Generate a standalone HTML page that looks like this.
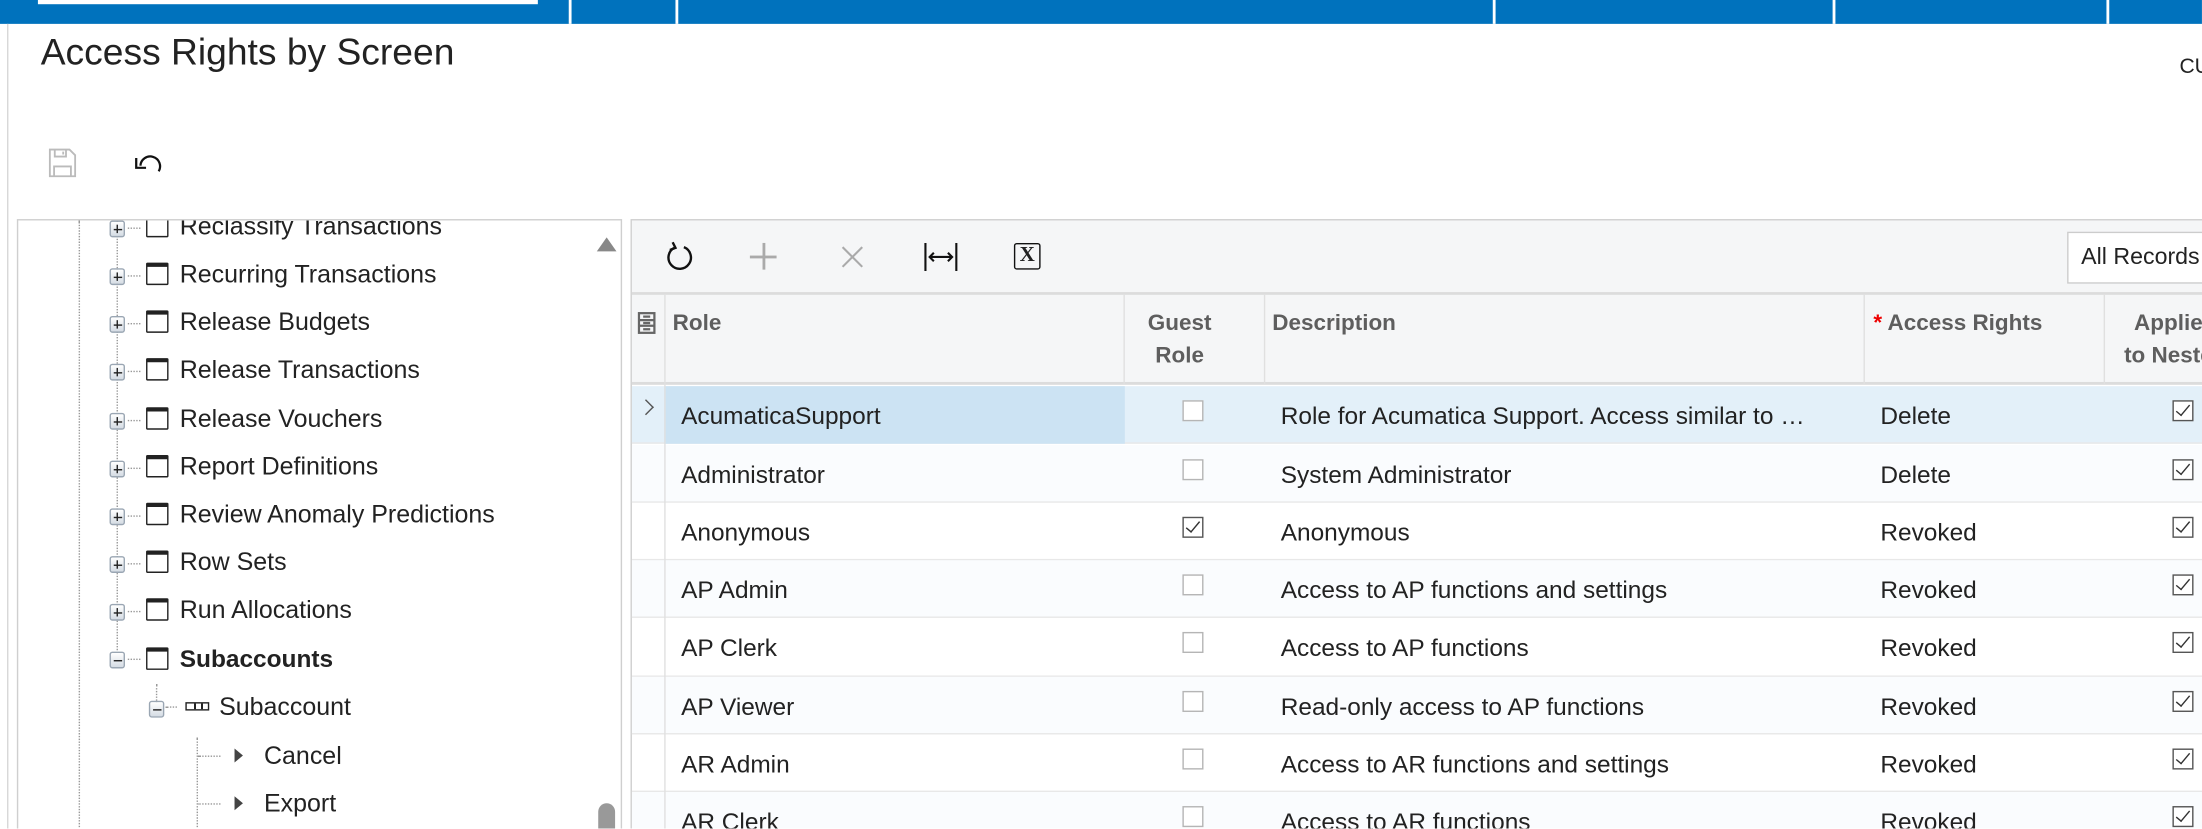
<!DOCTYPE html>
<html><head><meta charset="utf-8"><style>
*{box-sizing:border-box;margin:0;padding:0}
html,body{width:2202px;height:828px;overflow:hidden;background:#fff;font-family:"Liberation Sans",Arial,sans-serif;color:#222}
#w{position:absolute;left:0;top:0;width:1568px;height:590px;transform:scale(1.4043);transform-origin:0 0;overflow:hidden}
.a{position:absolute}
.top{left:0;top:0;width:1568px;height:17px;background:#0072bd}
.sep{top:0;width:2px;height:17px;background:#fff}
.tree{left:12px;top:156px;width:431px;height:440px;border:1px solid #cfcfcf;overflow:hidden}
.tr{position:absolute;font-size:17.8px;line-height:20px;white-space:nowrap}
.exp{position:absolute;width:11px;height:12px;border:1px solid #9aa6b3;border-radius:2px;background:linear-gradient(#fff,#d5dce4)}
.exp:before{content:"";position:absolute;left:1.5px;top:4.5px;width:6px;height:1.6px;background:#222}
.exp.p:after{content:"";position:absolute;left:3.7px;top:2.3px;width:1.6px;height:6px;background:#222}
.win{position:absolute;width:16px;height:16px;border:1.6px solid #222;border-top-width:3px;border-radius:1px}
.vd{position:absolute;border-left:1px dotted #999}
.hd{position:absolute;border-top:1px dotted #999;width:9px}
.grid{left:449px;top:156px;width:1130px;height:440px;border:1px solid #cfcfcf;background:#fff}
.tb{left:0;top:0;width:100%;height:53px;background:#f5f6f7;border-bottom:2px solid #dcdcdc}
.hdr{left:0;top:53px;width:100%;height:64px;background:#f5f6f7;border-bottom:2px solid #dcdcdc}
.h{position:absolute;font-size:16px;font-weight:bold;color:#5e5e5e;line-height:23px}
.vl{position:absolute;top:53px;width:1px;height:64px;background:#e0e0e0}
.row{position:absolute;left:0;width:100%;height:41.3px;border-bottom:1px solid #e8e8e8}
.c{position:absolute;font-size:17.4px;line-height:20px;top:11px;white-space:nowrap}
.cb{position:absolute;width:15px;height:15px;border:1px solid #b5b5b5;background:#fff;top:10px}
.cb.k{border-color:#555}
.cb.k:after{content:"";position:absolute;left:4px;top:0px;width:4px;height:9px;border:solid #333;border-width:0 1.5px 1.5px 0;transform:rotate(40deg)}
</style></head><body><div id="w">
<div class="a top"></div>
<div class="a" style="left:27px;top:0;width:356px;height:3px;background:#fff"></div>
<div class="a sep" style="left:405px"></div><div class="a sep" style="left:481px"></div><div class="a sep" style="left:1063px"></div><div class="a sep" style="left:1305px"></div><div class="a sep" style="left:1500px"></div>
<div class="a" style="left:5px;top:17px;width:1px;height:573px;background:#d8d8d8"></div>
<div class="a" style="left:29px;top:22px;font-size:26.5px;color:#222">Access Rights by Screen</div>
<div class="a" style="left:1552px;top:39px;font-size:15px">CU</div>
<svg class="a" style="left:34px;top:105px" width="21" height="22" viewBox="0 0 21 22" fill="none" stroke="#bbb" stroke-width="1.3"><path d="M1.5 1.5h14l4 4v15h-18z"/><path d="M5 1.5v5h8v-5M11 3v2"/><path d="M4.5 20.5v-7h12v7"/></svg>
<svg class="a" style="left:94px;top:106px" width="26" height="20" viewBox="0 0 26 20" fill="none" stroke="#111" stroke-width="1.6"><path d="M6 12 A7 7 0 1 1 19 16"/><path d="M3 6.5v7h7"/></svg>

<div class="a tree">
<div class="vd" style="left:43px;top:0;height:440px"></div>
<div class="vd" style="left:70px;top:0;height:306px"></div>
<div class="vd" style="left:98px;top:330px;height:20px"></div>
<div class="vd" style="left:127px;top:368px;height:80px"></div>
<div class="hd" style="left:78px;top:5px"></div><div class="exp p" style="left:65px;top:0px"></div><div class="win" style="left:91px;top:-4px;border-top-width:1.6px"></div><div class="tr" style="left:115px;top:-6px">Reclassify Transactions</div>
<div class="hd" style="left:78px;top:39px"></div><div class="exp p" style="left:65px;top:34px"></div><div class="win" style="left:91px;top:30px"></div><div class="tr" style="left:115px;top:28px">Recurring Transactions</div>
<div class="hd" style="left:78px;top:73px"></div><div class="exp p" style="left:65px;top:68px"></div><div class="win" style="left:91px;top:64px"></div><div class="tr" style="left:115px;top:62px">Release Budgets</div>
<div class="hd" style="left:78px;top:107px"></div><div class="exp p" style="left:65px;top:102px"></div><div class="win" style="left:91px;top:98px"></div><div class="tr" style="left:115px;top:96px">Release Transactions</div>
<div class="hd" style="left:78px;top:142px"></div><div class="exp p" style="left:65px;top:137px"></div><div class="win" style="left:91px;top:133px"></div><div class="tr" style="left:115px;top:131px">Release Vouchers</div>
<div class="hd" style="left:78px;top:176px"></div><div class="exp p" style="left:65px;top:171px"></div><div class="win" style="left:91px;top:167px"></div><div class="tr" style="left:115px;top:165px">Report Definitions</div>
<div class="hd" style="left:78px;top:210px"></div><div class="exp p" style="left:65px;top:205px"></div><div class="win" style="left:91px;top:201px"></div><div class="tr" style="left:115px;top:199px">Review Anomaly Predictions</div>
<div class="hd" style="left:78px;top:244px"></div><div class="exp p" style="left:65px;top:239px"></div><div class="win" style="left:91px;top:235px"></div><div class="tr" style="left:115px;top:233px">Row Sets</div>
<div class="hd" style="left:78px;top:278px"></div><div class="exp p" style="left:65px;top:273px"></div><div class="win" style="left:91px;top:269px"></div><div class="tr" style="left:115px;top:267px">Run Allocations</div>
<div class="hd" style="left:78px;top:312px"></div><div class="exp" style="left:65px;top:307px"></div><div class="win" style="left:91px;top:304px"></div><div class="tr" style="left:115px;top:302px;font-weight:bold;font-size:17.4px">Subaccounts</div>
<div class="hd" style="left:105px;top:346px;width:8px"></div><div class="exp" style="left:93px;top:342px"></div><div class="a" style="left:119px;top:343px;width:17px;height:6px;border:1.5px solid #222;background:linear-gradient(90deg,transparent 5px,#222 5px,#222 6.5px,transparent 6.5px,transparent 10px,#222 10px,#222 11.5px,transparent 11.5px)"></div><div class="tr" style="left:143px;top:336px">Subaccount</div>
<div class="hd" style="left:128px;top:381px;width:16px"></div><div class="a" style="left:154px;top:376px;border-left:6px solid #444;border-top:5px solid transparent;border-bottom:5px solid transparent"></div><div class="tr" style="left:175px;top:371px">Cancel</div>
<div class="hd" style="left:128px;top:415px;width:16px"></div><div class="a" style="left:154px;top:410px;border-left:6px solid #444;border-top:5px solid transparent;border-bottom:5px solid transparent"></div><div class="tr" style="left:175px;top:405px">Export</div>
<div class="a" style="left:412px;top:12px;border-bottom:10px solid #888;border-left:7px solid transparent;border-right:7px solid transparent"></div>
<div class="a" style="left:413px;top:415px;width:12px;height:30px;border-radius:6px;background:#999"></div>
</div>

<div class="a grid">
<div class="a tb">
<svg class="a" style="left:23px;top:14px" width="22" height="24" viewBox="0 0 22 24" fill="none" stroke="#111" stroke-width="1.7"><path d="M7 5.5 A8 8 0 1 0 14 5"/><path d="M6 1.5l2 4-4 1.5"/></svg>
<div class="a" style="left:84px;top:25px;width:19px;height:1.5px;background:#aaa"></div><div class="a" style="left:93px;top:16px;width:1.5px;height:19px;background:#aaa"></div>
<svg class="a" style="left:148px;top:18px" width="18" height="16" viewBox="0 0 18 16" stroke="#aaa" stroke-width="1.5"><path d="M2 1l14 14M16 1L2 15"/></svg>
<svg class="a" style="left:207px;top:15px" width="26" height="22" viewBox="0 0 26 22" fill="none" stroke="#111" stroke-width="1.5"><path d="M2 1v20M24 1v20M5 11h16"/><path d="M8 8l-3 3 3 3M18 8l3 3-3 3"/></svg>
<div class="a" style="left:272px;top:16px;width:19px;height:19px;border:1.5px solid #111;border-radius:2px;font:bold 15px 'Liberation Serif',serif;text-align:center;line-height:16px">X</div>
<div class="a" style="left:1022px;top:8px;width:110px;height:37px;background:#fff;border:1px solid #ccc;font-size:16.5px;line-height:35px;padding-left:9px">All Records</div>
</div>
<div class="a hdr"></div>
<div class="vl" style="left:350px"></div><div class="vl" style="left:450px"></div><div class="vl" style="left:877px"></div><div class="vl" style="left:1048px"></div>
<svg class="a" style="left:4px;top:65px" width="13" height="16" viewBox="0 0 13 16" fill="none" stroke="#666" stroke-width="1.6"><rect x="1" y="1" width="11" height="14"/><path d="M1 6h11M1 10h11M4 3.5h5M4 8h5M4 12.5h5"/></svg>
<div class="h" style="left:29px;top:62px">Role</div>
<div class="h" style="left:365px;top:62px;text-align:center;width:50px">Guest<br>Role</div>
<div class="h" style="left:456px;top:62px">Description</div>
<div class="h" style="left:884px;top:62px"><span style="color:#e00">*</span> Access Rights</div>
<div class="h" style="left:1054px;top:62px;text-align:center;width:90px">Applied<br>to Nested</div>

<div class="row" style="top:118px;background:#e3f0f9"><div class="a" style="left:23px;top:0;width:328px;height:41px;background:#cce3f3"></div><div class="a" style="left:6px;top:11px;width:8px;height:8px;border:solid #555;border-width:1.5px 1.5px 0 0;transform:rotate(45deg)"></div><div class="c" style="left:35px">AcumaticaSupport</div><div class="cb" style="left:392px"></div><div class="c" style="left:462px">Role for Acumatica Support. Access similar to …</div><div class="c" style="left:889px">Delete</div><div class="cb k" style="left:1097px"></div></div>
<div class="row" style="top:159.5px;background:#fafcfe"><div class="c" style="left:35px">Administrator</div><div class="cb" style="left:392px"></div><div class="c" style="left:462px">System Administrator</div><div class="c" style="left:889px">Delete</div><div class="cb k" style="left:1097px"></div></div>
<div class="row" style="top:200.8px"><div class="c" style="left:35px">Anonymous</div><div class="cb k" style="left:392px"></div><div class="c" style="left:462px">Anonymous</div><div class="c" style="left:889px">Revoked</div><div class="cb k" style="left:1097px"></div></div>
<div class="row" style="top:242.1px;background:#fafcfe"><div class="c" style="left:35px">AP Admin</div><div class="cb" style="left:392px"></div><div class="c" style="left:462px">Access to AP functions and settings</div><div class="c" style="left:889px">Revoked</div><div class="cb k" style="left:1097px"></div></div>
<div class="row" style="top:283.4px"><div class="c" style="left:35px">AP Clerk</div><div class="cb" style="left:392px"></div><div class="c" style="left:462px">Access to AP functions</div><div class="c" style="left:889px">Revoked</div><div class="cb k" style="left:1097px"></div></div>
<div class="row" style="top:324.7px;background:#fafcfe"><div class="c" style="left:35px">AP Viewer</div><div class="cb" style="left:392px"></div><div class="c" style="left:462px">Read-only access to AP functions</div><div class="c" style="left:889px">Revoked</div><div class="cb k" style="left:1097px"></div></div>
<div class="row" style="top:366px"><div class="c" style="left:35px">AR Admin</div><div class="cb" style="left:392px"></div><div class="c" style="left:462px">Access to AR functions and settings</div><div class="c" style="left:889px">Revoked</div><div class="cb k" style="left:1097px"></div></div>
<div class="row" style="top:407.3px;background:#fafcfe"><div class="c" style="left:35px">AR Clerk</div><div class="cb" style="left:392px"></div><div class="c" style="left:462px">Access to AR functions</div><div class="c" style="left:889px">Revoked</div><div class="cb k" style="left:1097px"></div></div>
<div class="vl" style="left:23px;top:53px;height:380px"></div>
</div>
</div></body></html>
